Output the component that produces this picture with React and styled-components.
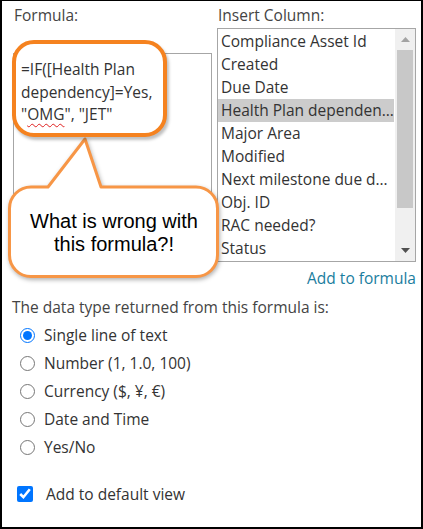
import React from "react";
import styled, { createGlobalStyle } from "styled-components";

const GlobalStyle = createGlobalStyle`
  html, body {
    margin: 0;
    padding: 0;
    background: #fff;
  }
  body {
    font-family: "Open Sans", "Noto Sans", sans-serif;
  }
`;

const columns = [
  "Compliance Asset Id",
  "Created",
  "Due Date",
  "Health Plan dependency",
  "Major Area",
  "Modified",
  "Next milestone due date",
  "Obj. ID",
  "RAC needed?",
  "Status",
];

const dataTypes = [
  "Single line of text",
  "Number (1, 1.0, 100)",
  "Currency ($, ¥, €)",
  "Date and Time",
  "Yes/No",
];

function App() {
  return (
    <>
      <GlobalStyle />
      <Frame>
        <Columns>
          <Column>
            <Label>Formula:</Label>
            <FormulaBox />
          </Column>
          <Column>
            <Label>Insert Column:</Label>
            <ListBox>
              <List>
                {columns.map((c, i) => (
                  <Row key={c} selected={i === 3}>
                    {c}
                  </Row>
                ))}
              </List>
              <Scrollbar>
                <ArrowBtn>
                  <svg width="9" height="5" viewBox="0 0 9 5">
                    <path d="M0 5 L4.5 0 L9 5 Z" fill="#a3a3a3" />
                  </svg>
                </ArrowBtn>
                <Thumb />
                <Track />
                <ArrowBtn>
                  <svg width="9" height="5" viewBox="0 0 9 5">
                    <path d="M0 0 L9 0 L4.5 5 Z" fill="#505050" />
                  </svg>
                </ArrowBtn>
              </Scrollbar>
            </ListBox>
            <AddLink href="#">Add to formula</AddLink>
          </Column>
        </Columns>

        <TypeLabel>The data type returned from this formula is:</TypeLabel>
        <Options>
          {dataTypes.map((t, i) => (
            <Option key={t}>
              <Radio type="radio" name="dtype" defaultChecked={i === 0} />
              {t}
            </Option>
          ))}
        </Options>

        <CheckRow>
          <Check type="checkbox" defaultChecked />
          Add to default view
        </CheckRow>

        <Callout>
          <svg width="216" height="146" viewBox="6 136 216 146">
            <path
              d="M31 187 H48 L85 139 L101 187 H196 A21.5 21.5 0 0 1 217.5 208.5 V255 A21.5 21.5 0 0 1 196 276.5 H31 A21.5 21.5 0 0 1 9.5 255 V208.5 A21.5 21.5 0 0 1 31 187 Z"
              fill="#fff"
              stroke="#f79646"
              strokeWidth="3"
              strokeLinejoin="round"
            />
          </svg>
          <CalloutText>
            What is wrong with
            <br />
            this formula?!
          </CalloutText>
        </Callout>

        <Highlight>
          =IF([Health Plan
          <br />
          dependency]=Yes,
          <br />
          "<Misspelt>OMG</Misspelt>", "JET"
        </Highlight>
      </Frame>
    </>
  );
}

export default App;

const Frame = styled.div`
  position: relative;
  width: 423px;
  height: 529px;
  box-sizing: border-box;
  border: 2px solid #000;
  border-top-width: 1px;
  padding: 4px 7px 0 10px;
  color: #444;
  font-size: 15.5px;
  overflow: hidden;
`;

const Columns = styled.div`
  display: grid;
  grid-template-columns: 199px 199px;
  column-gap: 5px;
  padding-left: 1px;
`;

const Column = styled.div`
  display: flex;
  flex-direction: column;
`;

const Label = styled.div`
  height: 20px;
  line-height: 20px;
  padding-left: 1px;
`;

const FormulaBox = styled.div`
  margin-top: 28px;
  height: 209px;
  border: 1px solid #a6a6a6;
  background: #fff;
`;

const ListBox = styled.div`
  margin-top: 3px;
  height: 234px;
  box-sizing: border-box;
  border: 1px solid #a6a6a6;
  display: flex;
`;

const List = styled.div`
  flex: 1;
  min-width: 0;
  padding-top: 1px;
`;

const Row = styled.div`
  height: 23px;
  line-height: 23px;
  padding-left: 3px;
  margin-right: 1px;
  color: #333;
  white-space: nowrap;
  overflow: hidden;
  text-overflow: ellipsis;
  background: ${(p) => (p.selected ? "#cccccc" : "transparent")};
`;

const Scrollbar = styled.div`
  width: 20px;
  background: #f0f0f0;
  display: flex;
  flex-direction: column;
  align-items: center;
`;

const ArrowBtn = styled.div`
  height: 21px;
  width: 100%;
  display: flex;
  align-items: center;
  justify-content: center;
`;

const Thumb = styled.div`
  width: 16px;
  height: 158px;
  background: #c8c8c8;
`;

const Track = styled.div`
  flex: 1;
`;

const AddLink = styled.a`
  align-self: flex-end;
  margin-top: 6px;
  height: 20px;
  line-height: 20px;
  color: #1a7d9e;
  text-decoration: none;
`;

const TypeLabel = styled.div`
  margin-top: 9px;
  height: 20px;
  line-height: 20px;
`;

const Options = styled.div`
  margin-top: 4px;
  display: flex;
  flex-direction: column;
`;

const Option = styled.label`
  height: 28px;
  display: flex;
  align-items: center;
  gap: 9px;
  color: #333;
`;

const Radio = styled.input`
  margin: 0 0 0 8px;
  width: 15px;
  height: 15px;
`;

const CheckRow = styled.label`
  margin-top: 19px;
  height: 28px;
  display: flex;
  align-items: center;
  gap: 13px;
  color: #333;
`;

const Check = styled.input`
  margin: 0 0 0 5px;
  width: 16px;
  height: 16px;
`;

const Callout = styled.div`
  position: absolute;
  left: 4px;
  top: 135px;
  width: 216px;
  height: 146px;

  svg {
    display: block;
    filter: drop-shadow(1px 2px 2px rgba(0, 0, 0, 0.3));
  }
`;

const CalloutText = styled.div`
  position: absolute;
  left: 4px;
  right: 4px;
  top: 52px;
  height: 90px;
  display: flex;
  align-items: center;
  justify-content: center;
  text-align: center;
  font-family: "Liberation Sans", Arial, sans-serif;
  font-size: 20px;
  line-height: 23px;
  color: #000;
`;

const Highlight = styled.div`
  position: absolute;
  left: 10px;
  top: 39px;
  width: 155px;
  height: 97px;
  box-sizing: border-box;
  border: 4px solid #f5821f;
  border-radius: 22px;
  background: #fff;
  box-shadow: 2px 3px 3px rgba(0, 0, 0, 0.25);
  padding: 14px 0 0 5px;
  line-height: 22.5px;
  color: #333;
  white-space: nowrap;
`;

const Misspelt = styled.span`
  text-decoration: underline wavy #e02020;
  text-decoration-thickness: 1px;
  text-underline-offset: 3px;
`;
